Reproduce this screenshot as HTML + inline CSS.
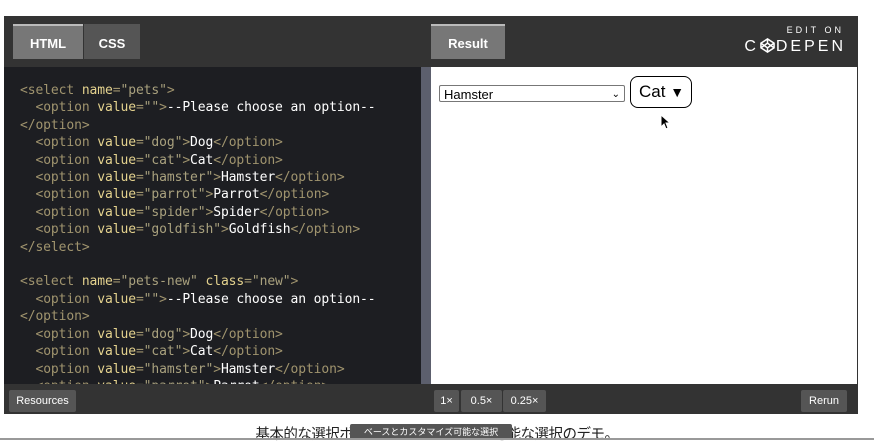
<html><head><style>
body{margin:0;width:874px;height:440px;background:#fff;position:relative;overflow:hidden;font-family:"Liberation Sans",sans-serif}
.f{position:absolute;left:4px;top:16px;width:854px;height:398px;background:#333}
.tab{position:absolute;top:8px;height:35px;line-height:35px;color:#fff;font-size:13px;font-weight:bold;text-align:center;border-top:2px solid #bbb;box-sizing:border-box}
.code{position:absolute;left:0;top:51px;width:417px;height:317px;background:#1d1e22;overflow:hidden}
pre{margin:0;position:absolute;left:16px;top:15px;font:13px/17.4px "DejaVu Sans Mono","Liberation Mono",monospace;color:#fff;letter-spacing:-0.1px}
.t{color:#a0946e}.a{color:#e4d28e}.s{color:#a9a17e}
.sb{position:absolute;left:417px;top:51px;width:10px;height:317px;background:#5c5f6d}
.res{position:absolute;left:427px;top:51px;width:426px;height:317px;background:#fff}
.btn{position:absolute;top:374px;height:22px;line-height:22px;background:#555;color:#fff;font-size:11px;text-align:center;border-radius:2px}
</style></head><body>
<div class="f">
<div class="tab" style="left:9px;width:70px;background:#777">HTML</div>
<div class="tab" style="left:80px;width:56px;background:#555;border-top-color:#555">CSS</div>
<div class="tab" style="left:427px;width:74px;background:#777">Result</div>
<div style="position:absolute;right:14px;top:9px;color:#fff;font-size:9px;letter-spacing:3px">EDIT ON</div>
<div style="position:absolute;right:12px;top:22px;color:#fff;font-size:16px;letter-spacing:3px">C<svg width="15" height="15" viewBox="0 0 16 16" style="vertical-align:-2px;margin:0 1px"><g fill="none" stroke="#fff" stroke-width="1.6"><path d="M8 1L15 5.5V10.5L8 15L1 10.5V5.5Z M1 5.5L8 10.5L15 5.5 M1 10.5L8 5.5L15 10.5 M8 1V5.5 M8 10.5V15"/></g></svg>DEPEN</div>
<div class="code"><pre><span class="t">&lt;select </span><span class="a">name</span><span class="t">=</span><span class="s">"pets"</span><span class="t">&gt;</span>
  <span class="t">&lt;option </span><span class="a">value</span><span class="t">=</span><span class="s">""</span><span class="t">&gt;</span>--Please choose an option--
<span class="t">&lt;/option&gt;</span>
  <span class="t">&lt;option </span><span class="a">value</span><span class="t">=</span><span class="s">"dog"</span><span class="t">&gt;</span>Dog<span class="t">&lt;/option&gt;</span>
  <span class="t">&lt;option </span><span class="a">value</span><span class="t">=</span><span class="s">"cat"</span><span class="t">&gt;</span>Cat<span class="t">&lt;/option&gt;</span>
  <span class="t">&lt;option </span><span class="a">value</span><span class="t">=</span><span class="s">"hamster"</span><span class="t">&gt;</span>Hamster<span class="t">&lt;/option&gt;</span>
  <span class="t">&lt;option </span><span class="a">value</span><span class="t">=</span><span class="s">"parrot"</span><span class="t">&gt;</span>Parrot<span class="t">&lt;/option&gt;</span>
  <span class="t">&lt;option </span><span class="a">value</span><span class="t">=</span><span class="s">"spider"</span><span class="t">&gt;</span>Spider<span class="t">&lt;/option&gt;</span>
  <span class="t">&lt;option </span><span class="a">value</span><span class="t">=</span><span class="s">"goldfish"</span><span class="t">&gt;</span>Goldfish<span class="t">&lt;/option&gt;</span>
<span class="t">&lt;/select&gt;</span>

<span class="t">&lt;select </span><span class="a">name</span><span class="t">=</span><span class="s">"pets-new"</span> <span class="a">class</span><span class="t">=</span><span class="s">"new"</span><span class="t">&gt;</span>
  <span class="t">&lt;option </span><span class="a">value</span><span class="t">=</span><span class="s">""</span><span class="t">&gt;</span>--Please choose an option--
<span class="t">&lt;/option&gt;</span>
  <span class="t">&lt;option </span><span class="a">value</span><span class="t">=</span><span class="s">"dog"</span><span class="t">&gt;</span>Dog<span class="t">&lt;/option&gt;</span>
  <span class="t">&lt;option </span><span class="a">value</span><span class="t">=</span><span class="s">"cat"</span><span class="t">&gt;</span>Cat<span class="t">&lt;/option&gt;</span>
  <span class="t">&lt;option </span><span class="a">value</span><span class="t">=</span><span class="s">"hamster"</span><span class="t">&gt;</span>Hamster<span class="t">&lt;/option&gt;</span>
  <span class="t">&lt;option </span><span class="a">value</span><span class="t">=</span><span class="s">"parrot"</span><span class="t">&gt;</span>Parrot<span class="t">&lt;/option&gt;</span></pre></div>
<div class="sb"></div>
<div class="res">
<div style="position:absolute;left:8px;top:18px;width:186px;height:17px;border:1px solid #777;border-radius:2px;font-size:13px;line-height:17px;padding-left:4px;box-sizing:border-box;color:#000">Hamster<span style="position:absolute;right:4px;top:0;font-size:10px">&#8964;</span></div>
<div style="position:absolute;left:199px;top:9px;width:62px;height:32px;border:1px solid #000;border-radius:8px;box-sizing:border-box;font-size:17px;line-height:30px;padding-left:8px;color:#000">Cat <span style="font-size:14px">&#9660;</span></div>
<svg style="position:absolute;left:229px;top:47px" width="10" height="16" viewBox="0 0 10 16"><path d="M1 1V13L4 10L6 15L8 14L6 9H10Z" fill="#000" stroke="#fff" stroke-width="1"/></svg>
</div>
<div class="btn" style="left:5px;width:67px">Resources</div>
<div class="btn" style="left:430px;width:25px">1×</div>
<div class="btn" style="left:457px;width:41px">0.5×</div>
<div class="btn" style="left:499px;width:43px">0.25×</div>
<div class="btn" style="left:797px;width:46px">Rerun</div>
</div>
<div style="position:absolute;left:0;top:423px;width:874px;text-align:center;font-size:14.5px;font-family:'Liberation Sans','Noto Sans CJK JP',sans-serif;color:#222;letter-spacing:-0.5px">基本的な選択ボックスとカスタマイズ可能な選択のデモ。</div>
<div style="position:absolute;left:350px;top:424px;width:162px;height:16px;background:#555;color:#fff;font-size:9px;line-height:16px;text-align:center;font-family:'Liberation Sans','Noto Sans CJK JP',sans-serif;border-radius:2px">ベースとカスタマイズ可能な選択</div>
<div style="position:absolute;left:0;top:438px;width:874px;height:2px;background:#999"></div>
</body></html>
